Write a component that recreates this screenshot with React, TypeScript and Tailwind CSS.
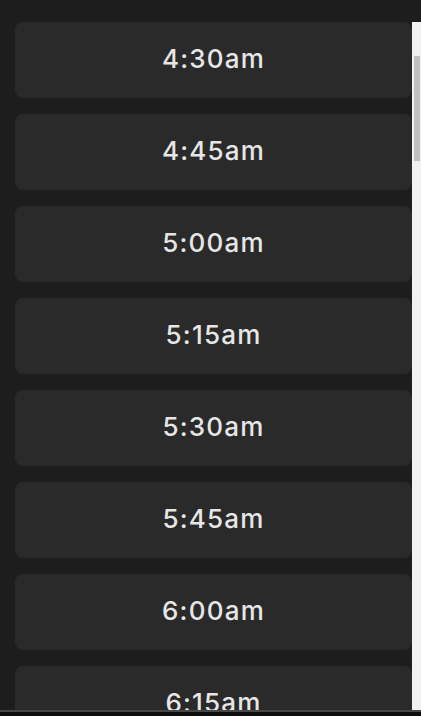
function fmt(i: number) {
  const total = 4 * 60 + 30 + i * 15;
  const h24 = Math.floor(total / 60) % 24;
  const m = total % 60;
  const ampm = h24 < 12 ? "am" : "pm";
  const h = h24 % 12 === 0 ? 12 : h24 % 12;
  return `${h}:${m.toString().padStart(2, "0")}${ampm}`;
}

const times = Array.from({ length: 8 }, (_, i) => fmt(i));

export default function App() {
  return (
    <div
      className="w-[421px] h-[716px] flex flex-col bg-[#1d1d1d] overflow-hidden"
      style={{ fontFamily: "Inter, 'Noto Sans', sans-serif" }}
    >
      <div className="h-[22px] shrink-0" />
      <div className="h-[688px] shrink-0 flex">
        <div className="flex-1 overflow-hidden">
          <div className="flex flex-col gap-4 pl-[15px]">
            {times.map((t) => (
              <button
                key={t}
                className="h-[76px] shrink-0 w-full rounded-lg bg-[#2a2a2a] text-[#e6e6e6] text-[26px] tracking-[1.2px] font-medium flex items-center justify-center pb-[4px]"
              >
                {t}
              </button>
            ))}
          </div>
        </div>
        <div className="w-[9px] shrink-0 bg-[#f1f1f1] pt-[34px] pl-[2px] pr-[1px]">
          <div className="h-[105px] bg-[#c1c1c1]" />
        </div>
      </div>
      <div className="h-[2px] shrink-0 bg-[#474747]" />
      <div className="flex-1 bg-[#0c0c0c]" />
    </div>
  );
}
